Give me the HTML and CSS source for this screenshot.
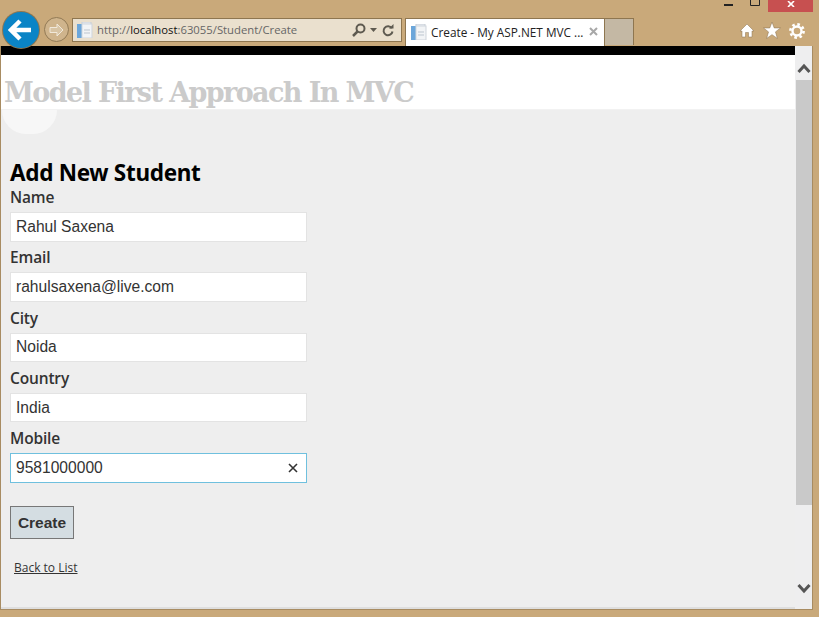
FILE: index.html
```html
<!DOCTYPE html>
<html lang="en">
<head>
<meta charset="utf-8">
<title>Create - My ASP.NET MVC Application</title>
<link rel="stylesheet" href="styles.css">
</head>
<body>
<div class="window">
  <div class="controls">
    <svg class="ctl min" width="9" height="2" viewBox="0 0 9 2"><rect width="9" height="2" fill="#222"/></svg>
    <svg class="ctl max" width="10" height="6" viewBox="0 0 10 6"><path d="M.5 0V5.500H9.500V0" fill="none" stroke="#222"/></svg>
    <div class="close"><svg width="8" height="6" viewBox="0 0 8 6"><path d="M1 0L4 3L7 0M1 6L4 3L7 6" fill="none" stroke="#fff" stroke-width="1.600"/></svg></div>
  </div>
  <div class="nav">
    <div class="back"><svg width="26" height="24" viewBox="0 0 26 24"><path d="M12 3L3 12L12 21M3 12H23" fill="none" stroke="#fff" stroke-width="4.500"/></svg></div>
    <div class="forward"><svg width="18" height="16" viewBox="0 0 18 16"><path d="M9 2L15 8L9 14V10.500H2V5.500H9Z" fill="#d8c4a4" stroke="#f0e8da" stroke-width="1"/></svg></div>
    <div class="address">
      <svg class="doc" width="16" height="16" viewBox="0 0 16 16"><rect x="5" y="0" width="9" height="15" fill="#e8edf2" stroke="#c8ced6"/><rect x="0" y="2" width="5" height="14" fill="#6ba6da"/><rect x="5" y="2" width="10" height="14" fill="#f2f4f6" stroke="#cfd5dc"/><path d="M7 8H13M7 11H13" stroke="#bcc5cf"/></svg>
      <span class="url">http://<b>localhost</b>:63055/Student/Create</span>
      <svg class="search" width="14" height="14" viewBox="0 0 14 14"><circle cx="8.500" cy="5.500" r="4" fill="none" stroke="#5e5a50" stroke-width="2"/><path d="M5.500 8.500L1 13" stroke="#5e5a50" stroke-width="2.500"/></svg>
      <svg class="caret" width="7" height="4" viewBox="0 0 7 4"><path d="M0 0H7L3.500 4Z" fill="#5e5a50"/></svg>
      <svg class="refresh" width="12" height="13" viewBox="0 0 12 13"><path d="M9.800 4.200A4.500 4.500 0 1 0 10.500 7.500" fill="none" stroke="#5e5a50" stroke-width="2"/><path d="M7 4.500H11.500V0Z" fill="#5e5a50"/></svg>
    </div>
    <div class="tab">
      <svg class="doc" width="16" height="16" viewBox="0 0 16 16"><rect x="5" y="0" width="9" height="15" fill="#e8edf2" stroke="#c8ced6"/><rect x="0" y="2" width="5" height="14" fill="#6ba6da"/><rect x="5" y="2" width="10" height="14" fill="#f2f4f6" stroke="#cfd5dc"/><path d="M7 8H13M7 11H13" stroke="#bcc5cf"/></svg>
      <span class="tab-title">Create - My ASP.NET MVC ...</span>
      <svg class="tab-x" width="9" height="9" viewBox="0 0 9 9"><path d="M1 1L8 8M8 1L1 8" stroke="#a8a8a8" stroke-width="2"/></svg>
    </div>
    <div class="new-tab"></div>
    <div class="tools">
      <svg width="16" height="15" viewBox="0 0 16 15"><path d="M8 1L1 8H3V14H6.500V9.500H9.500V14H13V8H15Z" fill="#fff" stroke="#8a7350" stroke-width=".5"/></svg>
      <svg width="18" height="17" viewBox="0 0 17 16"><path d="M8.500 0L10.600 5.600H16.500L11.800 9.300L13.600 15.500L8.500 11.900L3.400 15.500L5.200 9.300L.5 5.600H6.400Z" fill="#fff" stroke="#8a7350" stroke-width=".5"/></svg>
      <svg width="16" height="16" viewBox="0 0 16 16"><circle cx="8" cy="8" r="4.500" fill="none" stroke="#fff" stroke-width="2.400"/><circle cx="8" cy="8" r="6.600" fill="none" stroke="#fff" stroke-width="2.600" stroke-dasharray="2.600 2.600"/></svg>
    </div>
  </div>
  <div class="viewport">
    <div class="page">
      <div class="blackbar"></div>
      <header class="masthead">
        <h1 class="site-title">Model First Approach In MVC</h1>
      </header>
      <div class="blob"></div>
      <main class="content">
        <h2 class="form-title">Add New Student</h2>
        <form class="form">
          <div class="field"><label class="label" for="n">Name</label><input class="input" id="n" value="Rahul Saxena"></div>
          <div class="field"><label class="label" for="e">Email</label><input class="input" id="e" value="rahulsaxena@live.com"></div>
          <div class="field"><label class="label" for="c">City</label><input class="input" id="c" value="Noida"></div>
          <div class="field"><label class="label" for="o">Country</label><input class="input" id="o" value="India"></div>
          <div class="field"><label class="label" for="m">Mobile</label>
            <div class="input-wrap"><input class="input focused" id="m" value="9581000000"><svg class="clear" width="10" height="10" viewBox="0 0 10 10"><path d="M1 1L9 9M9 1L1 9" stroke="#333" stroke-width="1.600"/></svg></div>
          </div>
          <button class="create" type="button">Create</button>
        </form>
        <a class="back-link" href="#">Back to List</a>
      </main>
    </div>
    <div class="scrollbar">
      <svg class="arrow" width="17" height="34" viewBox="0 0 17 34"><path d="M3.500 26L9 20L14.500 26" fill="none" stroke="#555" stroke-width="3"/></svg>
      <div class="thumb"></div>
      <svg class="arrow" width="17" height="105" viewBox="0 0 17 105"><path d="M3.500 80L9 86L14.500 80" fill="none" stroke="#555" stroke-width="3"/></svg>
    </div>
  </div>
</div>
</body>
</html>
```
FILE: styles.css
```css
* { box-sizing: border-box; }
html, body { margin: 0; height: 100%; overflow: hidden; }
body { background: #c9a97a; font-family: "Open Sans", sans-serif; }
.window { width: 819px; height: 617px; display: flex; flex-direction: column; }

.controls { height: 12px; display: flex; justify-content: flex-end; align-items: flex-start; padding-right: 6px; }
.ctl.min { margin: 4px 17px 0 0; }
.ctl.max { margin: 0 8px 0 0; }
.close { width: 45px; height: 12px; background: #c75050; display: flex; align-items: flex-start; justify-content: center; padding-top: 1px; }

.nav { height: 34px; display: flex; align-items: flex-start; padding-left: 3px; }
.back { width: 36px; height: 36px; border-radius: 50%; background: #0a84c6; box-shadow: 0 0 0 1px #8e7650; display: flex; align-items: center; justify-content: center; flex: none; position: relative; z-index: 2; }
.forward { width: 25px; height: 25px; margin: 5px 0 0 5px; border-radius: 50%; border: 1px solid #927a55; background: #cfb48c; display: flex; align-items: center; justify-content: center; flex: none; }
.address { width: 330px; height: 24px; margin: 6px 0 0 3px; background: #eae0ce; border: 1px solid #8e7650; display: flex; align-items: center; padding: 0 7px 0 4px; font-size: 11.300px; color: #666; flex: none; }
.doc { flex: none; }
.url { margin-left: 4px; flex: 1; white-space: nowrap; padding-bottom: 1px; }
.url b { font-weight: 400; color: #111; }
.search { margin-right: 4px; }
.caret { margin-right: 5px; }
.tab { width: 200px; height: 28px; margin: 6px 0 0 3px; background: #fff; border: 1px solid #8e7650; border-bottom: 0; display: flex; align-items: center; padding: 0 6px 2px 5px; flex: none; }
.tab-title { margin-left: 4px; font-size: 11.800px; color: #222; flex: 1; white-space: nowrap; }
.new-tab { width: 29px; height: 27px; margin-top: 6px; background: #c4b8a4; border: 1px solid #8e7650; border-left: 0; border-bottom: 0; flex: none; }
.tools { display: flex; align-items: center; gap: 8px; margin: 10px 0 0 105px; }

.viewport { height: 564px; margin-right: 6px; border-left: 1px solid #a88c62; border-right: 1px solid #a88c62; border-bottom: 1px solid #a88c62; display: flex; }
.page { width: 794px; background: #eee; position: relative; border-bottom: 2px solid #dedede; }
.blackbar { height: 9px; background: #000; }
.masthead { height: 55px; background: #fff; padding: 21px 0 0 3px; border-bottom: 1px solid #f2f2f2; }
.site-title { margin: 0; font-family: "DejaVu Serif", serif; font-weight: 700; font-size: 27px; line-height: 34px; color: #cbcbcb; white-space: nowrap; letter-spacing: -1.600px; }
.blob { position: absolute; left: 1px; top: 64px; width: 55px; height: 24px; background: #f7f7f7; border-radius: 0 0 28px 28px; }
.content { padding: 48px 0 0 9px; }
.form-title { margin: 0; font-size: 22.500px; line-height: 30px; font-weight: 700; color: #000; font-family: "Noto Sans", sans-serif; letter-spacing: -.3px; }
.form { display: flex; flex-direction: column; }
.field { height: 60.300px; display: flex; flex-direction: column; align-items: flex-start; }
.label { height: 27px; margin-top: -3px; font-size: 15.500px; line-height: 24px; font-weight: 600; color: #333; letter-spacing: -.15px; }
.input { width: 297px; height: 29.500px; padding: 0 5px; border: 1px solid #e3e3e3; background: #fff; font-family: "Liberation Sans", sans-serif; font-size: 15.600px; color: #333; outline: none; margin: 0; display: block; }
.input-wrap { position: relative; }
.focused { border-color: #6fc0de; }
.clear { position: absolute; right: 9px; top: 10px; }
.create { width: 64px; height: 33px; margin-top: 17px; padding: 0; background: #d4dde2; border: 1px solid #777; font-family: "Liberation Sans", sans-serif; font-size: 15.500px; font-weight: 700; color: #333; }
.back-link { display: inline-block; margin: 19px 0 0 4px; font-size: 12px; line-height: 20px; color: #333; }

.scrollbar { width: 17px; background: #eeeeef; display: flex; flex-direction: column; }
.arrow { display: block; flex: none; }
.thumb { height: 425px; margin-left: 1px; background: #c9c9c9; flex: none; }
```
